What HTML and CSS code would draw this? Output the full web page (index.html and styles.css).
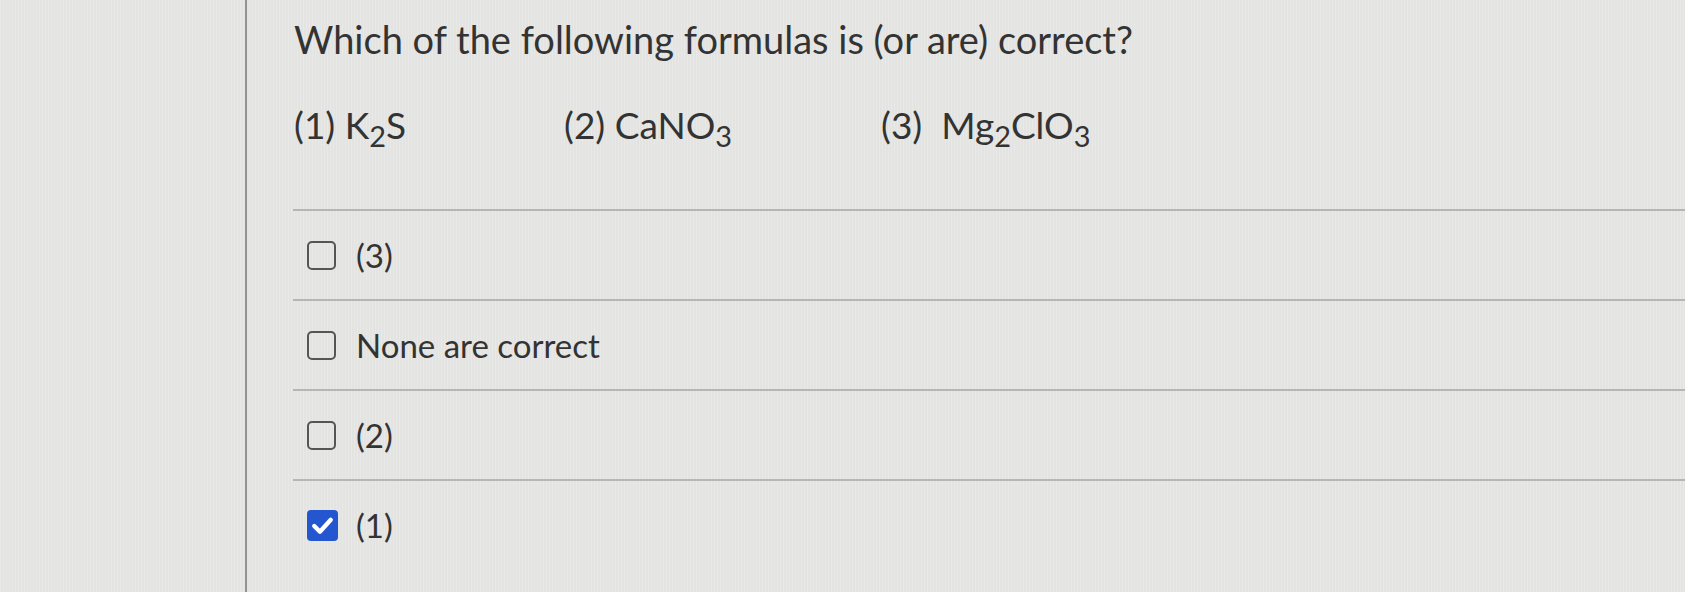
FILE: index.html
```html
<!DOCTYPE html>
<html lang="en">

<head>
    <meta charset="UTF-8">
    <title>Question</title>
    <link rel="stylesheet" href="styles.css">
</head>

<body>
    <div class="page">
        <!--左侧栏-->
        <div class="side"></div>
        <!--题目区域-->
        <div class="main">
            <h1 class="title">Which of the following formulas is (or are) correct?</h1>
            <div class="formulas">
                <span>(1) K<sub>2</sub>S</span>
                <span>(2) CaNO<sub>3</sub></span>
                <span>(3)&nbsp; Mg<sub>2</sub>ClO<sub>3</sub></span>
            </div>
            <ul class="options">
                <li><span class="box"></span>(3)</li>
                <li><span class="box"></span>None are correct</li>
                <li><span class="box"></span>(2)</li>
                <li>
                    <span class="box checked">
                        <svg viewBox="0 0 30 30" width="31" height="31">
                            <path d="M7 15.5 L12.5 21 L23 9.5" fill="none" stroke="#fff" stroke-width="4.2"
                                stroke-linecap="round" stroke-linejoin="round" />
                        </svg>
                    </span>(1)
                </li>
            </ul>
        </div>
    </div>
</body>

</html>
```

FILE: styles.css
```css
* {
    margin: 0;
    padding: 0;
    list-style: none;
    box-sizing: border-box;
}

html,
body {
    height: 100%;
}

body {
    font-family: Lato, "Liberation Sans", sans-serif;
    color: #333;
    background-color: #e6e6e4;
    background-image: repeating-linear-gradient(90deg, rgba(255, 255, 255, 0.1) 0, rgba(255, 255, 255, 0.1) 1px, rgba(0, 0, 0, 0.012) 1px, rgba(0, 0, 0, 0.012) 3px);
    overflow: hidden;
}

.page {
    display: flex;
    height: 100%;
}

.side {
    width: 247px;
    flex-shrink: 0;
    border-right: 2px solid #939393;
}

.main {
    flex: 1;
    padding-left: 47px;
}

.title {
    font-size: 38px;
    font-weight: 400;
    line-height: 46px;
    padding-top: 16px;
}

.formulas {
    display: grid;
    grid-template-columns: 270px 317px auto;
    font-size: 37px;
    line-height: 44px;
    margin-top: 41px;
    padding-left: 0;
}

.formulas sub {
    font-size: 0.78em;
    vertical-align: -0.28em;
    line-height: 0;
}

.options {
    margin-top: 62px;
    margin-left: -1px;
}

.options li {
    display: flex;
    align-items: center;
    height: 90px;
    border-top: 2px solid #b6b6b4;
    font-size: 33px;
    padding-left: 14px;
}

.box {
    display: block;
    width: 29px;
    height: 29px;
    border: 2px solid #555;
    border-radius: 5px;
    margin-right: 20px;
}

.box.checked {
    width: 31px;
    height: 31px;
    border: none;
    background-color: #2456cf;
    border-radius: 4px;
    margin-right: 18px;
}

.box svg {
    display: block;
}
```
